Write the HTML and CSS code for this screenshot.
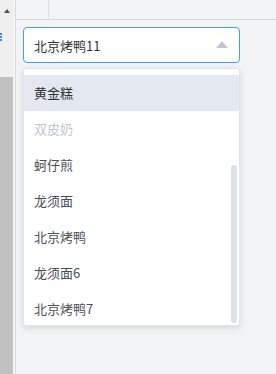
FILE: index.html
```html
<!DOCTYPE html>
<html>
<head>
  <meta charset="utf-8">
  <link rel="stylesheet" href="styles.css">
</head>
<body>
  <div class="page">
    <div class="side">
      <div class="track">
        <div class="arrow-btn"><span class="arrow"></span></div>
        <div class="marks"></div>
        <div class="thumb"></div>
      </div>
    </div>
    <div class="main">
      <div class="topbar"><div class="cell"></div></div>
      <div class="content">
        <div class="select">
          <span class="value">北京烤鸭11</span>
          <span class="caret"></span>
        </div>
        <div class="dropdown">
          <ul class="options">
            <li class="option hover">黄金糕</li>
            <li class="option disabled">双皮奶</li>
            <li class="option">蚵仔煎</li>
            <li class="option">龙须面</li>
            <li class="option">北京烤鸭</li>
            <li class="option">龙须面6</li>
            <li class="option">北京烤鸭7</li>
          </ul>
          <div class="bar"></div>
        </div>
      </div>
    </div>
  </div>
</body>
</html>
```

FILE: styles.css
```css
* { box-sizing: border-box; }
body {
  margin: 0;
  background: #f2f3f5;
  font-family: "Noto Sans CJK SC", "Noto Sans", sans-serif;
  font-size: 13px;
  color: #303133;
}
.page { display: flex; height: 374px; overflow: hidden; }

.side {
  width: 16px;
  border-right: 1px solid #d9d9d9;
  padding-right: 2px;
}
.track {
  display: flex;
  flex-direction: column;
  height: 100%;
  background: #efefef;
}
.arrow-btn { height: 17px; display: flex; justify-content: center; align-items: flex-end; padding-left: 1px; }
.arrow {
  width: 0; height: 0;
  border-left: 3px solid transparent;
  border-right: 3px solid transparent;
  border-bottom: 4px solid #505050;
  margin-bottom: 4px;
}
.marks {
  height: 60px;
  border-left: 2px dotted #3a8ee6;
  margin-top: 16px;
  height: 8px;
  margin-bottom: 36px;
  width: 2px;
}
.thumb { flex: 1; background: #c1c1c1; }

.main { flex: 1; display: flex; flex-direction: column; }
.topbar { height: 20px; border-bottom: 1px solid #d9d9d9; display: flex; }
.cell { width: 33px; border-right: 1px solid #e0e0e0; }
.content { padding: 7px 0 0 7px; }

.select {
  width: 217px;
  height: 36px;
  background: #fff;
  border: 1px solid #409eff;
  border-radius: 4px;
  display: flex;
  align-items: center;
  justify-content: space-between;
  padding: 0 11px 0 10px;
}
.value { color: #303133; }
.caret {
  width: 0; height: 0;
  border-left: 6px solid transparent;
  border-right: 6px solid transparent;
  border-bottom: 7px solid #c0c6d4;
  margin-top: -2px;
}

.dropdown {
  position: relative;
  width: 217px;
  height: 258px;
  margin-top: 5px;
  background: #fff;
  border: 1px solid #e0e4eb;
  border-radius: 3px;
  box-shadow: 0 2px 6px rgba(0, 0, 0, 0.12);
  overflow: hidden;
}
.options { list-style: none; margin: 0; padding: 6px 0 0; }
.option {
  height: 36px;
  line-height: 36px;
  padding-left: 10px;
  color: #4a4e57;
}
.option.hover { background: #e4e8f0; color: #303133; }
.option.disabled { color: #c0c6d4; }
.bar {
  position: absolute;
  right: 2px;
  top: 96px;
  width: 6px;
  height: 158px;
  border-radius: 3px;
  background: #dde1ea;
}
```
